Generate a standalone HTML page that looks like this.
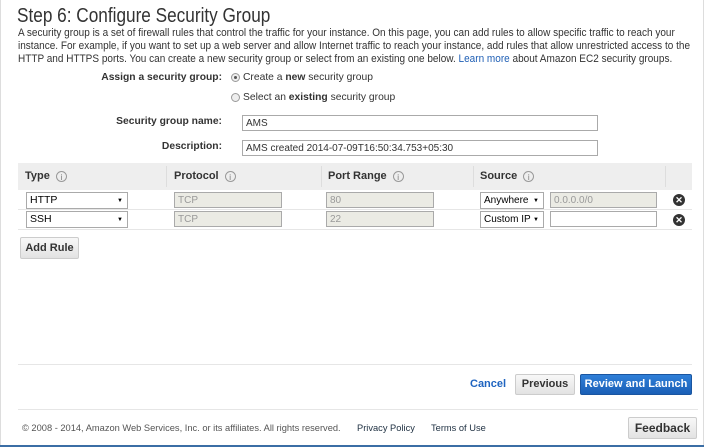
<!DOCTYPE html><html><head><style>
body{margin:0;width:704px;height:447px;background:#fff;font-family:"Liberation Sans",Arial,sans-serif;position:relative;overflow:hidden;color:#333}
div,span,input{position:absolute;box-sizing:border-box}
.lbl{font-size:10.3px;font-weight:bold;text-align:right;width:200px;left:22px}
.inp{border:1px solid #aaa;background:#fff;font-size:10px;padding:1px 3px;line-height:13px;height:16px}
.dis{background:#ebebe4;color:#999;border:1px solid #aaa}
.sel{border:1px solid #aaa;background:#fff;font-size:10.5px;padding:1px 3px;height:17px;line-height:13px;color:#000}
.sel:after{content:"▼";position:absolute;right:4px;top:2px;font-size:6px}
.hd{font-size:11px;font-weight:bold;top:170px}
.i{display:inline-block;width:11px;height:11px;border:1px solid #999;border-radius:50%;font-size:8px;text-align:center;line-height:11px;font-weight:normal;color:#777;margin-left:6px;vertical-align:-1px;position:relative}
.x{width:12px;height:12px;border-radius:50%;background:#333;color:#fff;font-size:9px;text-align:center;line-height:12px;font-weight:bold}
.btn{border:1px solid #ccc;border-radius:2px;background:linear-gradient(#f8f8f8,#e2e2e2);font-size:11px;font-weight:bold;text-align:center;color:#333}
.ln{white-space:nowrap;font-size:10.6px;transform:scaleX(0.945);transform-origin:0 0;left:18px}
</style></head><body>
<div style="left:0;top:0;width:1px;height:447px;background:#ddd"></div>
<div style="right:0;top:0;width:1px;height:447px;background:#ddd"></div>
<div style="left:0;bottom:0;width:704px;height:2px;background:#3b6ea5"></div>
<div style="left:17px;top:5px;font-size:20px;color:#333;white-space:nowrap;transform:scaleX(0.86);transform-origin:0 0">Step 6: Configure Security Group</div>
<div class="ln" style="top:27px">A security group is a set of firewall rules that control the traffic for your instance. On this page, you can add rules to allow specific traffic to reach your</div>
<div class="ln" style="top:40px">instance. For example, if you want to set up a web server and allow Internet traffic to reach your instance, add rules that allow unrestricted access to the</div>
<div class="ln" style="top:53px">HTTP and HTTPS ports. You can create a new security group or select from an existing one below. <span style="position:static;color:#1f5fb5">Learn more</span> about Amazon EC2 security groups.</div>
<div class="lbl" style="top:72px">Assign a security group:</div>
<div style="left:231px;top:73px;width:9px;height:9px;border:1px solid #999;border-radius:50%;background:#eee"><div style="left:2px;top:2px;width:3px;height:3px;border-radius:50%;background:#555"></div></div>
<div style="left:243px;top:72px;font-size:10.3px">Create a <b>new</b> security group</div>
<div style="left:231px;top:93px;width:9px;height:9px;border:1px solid #999;border-radius:50%;background:#eee"></div>
<div style="left:243px;top:92px;font-size:10.3px">Select an <b>existing</b> security group</div>
<div class="lbl" style="top:116px">Security group name:</div>
<div class="inp" style="left:242px;top:115px;width:356px">AMS</div>
<div class="lbl" style="top:141px">Description:</div>
<div class="inp" style="left:242px;top:140px;width:356px">AMS created 2014-07-09T16:50:34.753+05:30</div>
<div style="left:18px;top:163px;width:674px;height:27px;background:#eee"></div>
<div style="left:166px;top:166px;width:1px;height:21px;background:#ddd"></div>
<div style="left:321px;top:166px;width:1px;height:21px;background:#ddd"></div>
<div style="left:473px;top:166px;width:1px;height:21px;background:#ddd"></div>
<div style="left:665px;top:166px;width:1px;height:21px;background:#ddd"></div>
<div class="hd" style="left:25px">Type<span class="i">i</span></div>
<div class="hd" style="left:174px">Protocol<span class="i">i</span></div>
<div class="hd" style="left:328px">Port Range<span class="i">i</span></div>
<div class="hd" style="left:480px">Source<span class="i">i</span></div>
<div style="left:18px;top:209px;width:674px;height:1px;background:#e6e6e6"></div>
<div style="left:18px;top:229px;width:674px;height:1px;background:#e6e6e6"></div>
<div class="sel" style="left:26px;top:192px;width:102px">HTTP</div>
<div class="inp dis" style="left:174px;top:192px;width:108px">TCP</div>
<div class="inp dis" style="left:326px;top:192px;width:108px">80</div>
<div class="sel" style="left:480px;top:192px;width:64px;font-size:10px">Anywhere</div>
<div class="inp dis" style="left:550px;top:192px;width:107px">0.0.0.0/0</div>
<div class="x" style="left:673px;top:194px">✕</div>
<div class="sel" style="left:26px;top:211px;width:102px">SSH</div>
<div class="inp dis" style="left:174px;top:211px;width:108px">TCP</div>
<div class="inp dis" style="left:326px;top:211px;width:108px">22</div>
<div class="sel" style="left:480px;top:211px;width:64px;font-size:10px">Custom IP</div>
<div class="inp" style="left:550px;top:211px;width:107px"></div>
<div class="x" style="left:673px;top:214px">✕</div>
<div class="btn" style="left:20px;top:237px;width:59px;height:22px;line-height:20px">Add Rule</div>
<div style="left:18px;top:364px;width:674px;height:1px;background:#e6e6e6"></div>
<div style="left:470px;top:378px;font-size:11px;font-weight:bold;color:#1f64c0">Cancel</div>
<div class="btn" style="left:515px;top:374px;width:60px;height:21px;line-height:19px">Previous</div>
<div style="left:580px;top:374px;width:112px;height:21px;line-height:19px;background:linear-gradient(#2f7fd8,#1a5fb6);border:1px solid #1a55a0;border-radius:2px;color:#fff;font-size:11px;font-weight:bold;text-align:center">Review and Launch</div>
<div style="left:18px;top:409px;width:680px;height:1px;background:#e6e6e6"></div>
<div style="left:22px;top:423px;font-size:9.3px;color:#555">© 2008 - 2014, Amazon Web Services, Inc. or its affiliates. All rights reserved.</div>
<div style="left:357px;top:423px;font-size:9.3px;color:#234">Privacy Policy</div>
<div style="left:431px;top:423px;font-size:9.3px;color:#234">Terms of Use</div>
<div class="btn" style="left:628px;top:417px;width:69px;height:22px;line-height:20px;font-size:12px">Feedback</div>
</body></html>
